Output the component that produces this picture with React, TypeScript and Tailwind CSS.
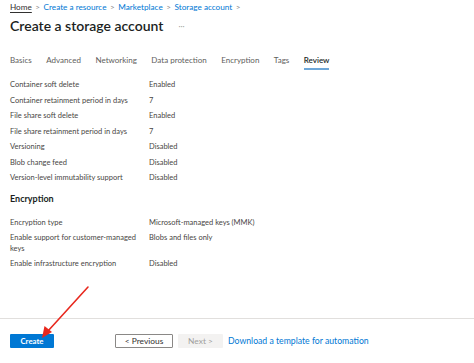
import React from "react";

const basics = [
  ["Container soft delete", "Enabled"],
  ["Container retainment period in days", "7"],
  ["File share soft delete", "Enabled"],
  ["File share retainment period in days", "7"],
  ["Versioning", "Disabled"],
  ["Blob change feed", "Disabled"],
  ["Version-level immutability support", "Disabled"],
];

const tabs = ["Basics", "Advanced", "Networking", "Data protection", "Encryption", "Tags", "Review"];

function Crumb({ text, home }: { text: string; home?: boolean }) {
  return (
    <>
      <span className={home ? "text-[#323130] underline underline-offset-2" : "text-[#0078d4]"}>{text}</span>
      <span className="mx-[3.5px] text-[#8a8886]">&gt;</span>
    </>
  );
}

export default function App() {
  return (
    <div
      className="relative w-[474px] h-[363px] overflow-hidden bg-white text-[#323130]"
      style={{ fontFamily: 'Lato, "Open Sans", sans-serif' }}
    >
      {/* Breadcrumb */}
      <div className="px-[10px] pt-[1px] h-[13px] text-[8.2px] leading-[13px] whitespace-nowrap">
        <Crumb text="Home" home />
        <Crumb text="Create a resource" />
        <Crumb text="Marketplace" />
        <Crumb text="Storage account" />
      </div>

      {/* Title */}
      <div className="px-[10px] flex items-center h-[25px]">
        <h1 className="text-[14px] leading-[25px] font-semibold text-[#201f1e]">Create a storage account</h1>
        <span className="ml-[15px] text-[8px] text-[#a19f9d]">···</span>
      </div>

      {/* Tabs */}
      <div className="flex px-[10px] mt-[13px] gap-[14.5px] text-[8px]">
        {tabs.map((t) => (
          <div key={t} className="relative h-[19px] leading-[19px] text-[#605e5c]">
            <span className={t === "Review" ? "text-[#201f1e] font-semibold" : ""}>{t}</span>
            {t === "Review" && <div className="absolute left-0 right-0 bottom-[0px] h-[2px] bg-[#6ea7d8]" />}
          </div>
        ))}
      </div>

      {/* Data protection rows */}
      <div className="px-[10px] mt-[7px] text-[7.5px]">
        {basics.map(([k, v]) => (
          <div key={k} className="grid grid-cols-[139px_1fr] leading-[15.5px]">
            <span className="text-[#484644]">{k}</span>
            <span className="text-[#484644]">{v}</span>
          </div>
        ))}

        <div className="mt-[6px] mb-[9px] text-[9px] leading-[14px] font-bold text-[#201f1e]">Encryption</div>

        <div className="grid grid-cols-[139px_1fr] leading-[15.5px]">
          <span className="text-[#484644]">Encryption type</span>
          <span className="text-[#484644]">Microsoft-managed keys (MMK)</span>
        </div>
        <div className="grid grid-cols-[139px_1fr] leading-[11px] py-[1.75px]">
          <span className="text-[#484644] pr-[10px]">Enable support for customer-managed keys</span>
          <span className="text-[#484644]">Blobs and files only</span>
        </div>
        <div className="grid grid-cols-[139px_1fr] leading-[15.5px]">
          <span className="text-[#484644]">Enable infrastructure encryption</span>
          <span className="text-[#484644]">Disabled</span>
        </div>
      </div>

      {/* Footer */}
      <div className="absolute left-0 right-0 top-[318px] border-t border-[#e1dfdd]">
        <div className="flex items-center px-[10px] pt-[15px]">
          <button className="w-[44px] h-[14px] bg-[#0078d4] text-white text-[7.8px] font-bold leading-[14px] rounded-[1px]">
            Create
          </button>
          <button className="ml-[61px] w-[58px] h-[14px] border border-[#8a8886] text-[8.4px] leading-[12px] text-[#323130] rounded-[1px]">
            &lt; Previous
          </button>
          <button className="ml-[5px] w-[45px] h-[14px] bg-[#f3f2f1] text-[8.4px] leading-[14px] text-[#a19f9d] rounded-[1px]">
            Next &gt;
          </button>
          <span className="ml-[5px] text-[8.7px] text-[#0078d4] whitespace-nowrap">Download a template for automation</span>
        </div>
      </div>

      {/* Red annotation arrow */}
      <svg className="absolute left-0 top-0" width="474" height="363" viewBox="0 0 474 363">
        <line x1="88" y1="287" x2="48" y2="331" stroke="#e8281e" strokeWidth="1.6" strokeLinecap="round" />
        <polygon points="42,338 44.5,326 52,332" fill="#e8281e" />
      </svg>
    </div>
  );
}
